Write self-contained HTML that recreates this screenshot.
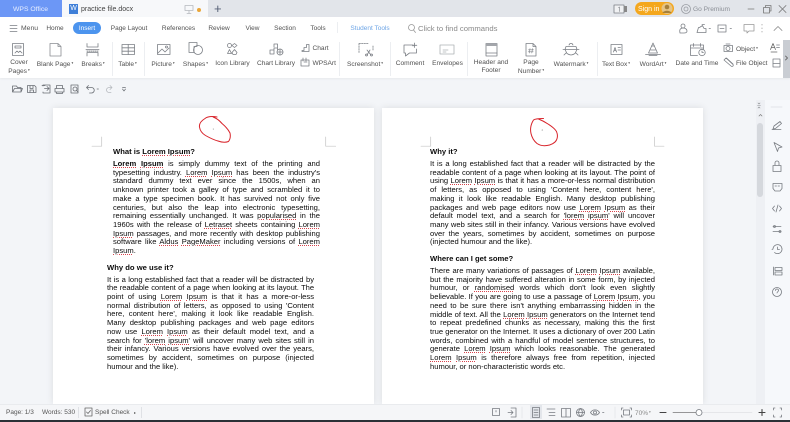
<!DOCTYPE html>
<html lang="en"><head><meta charset="utf-8"><title>practice file.docx</title>
<style>
*{box-sizing:border-box}
html,body{margin:0;padding:0;width:790px;height:422px;overflow:hidden;background:#f3f5f8}
body{position:relative;font-family:"Liberation Sans",sans-serif;color:#555}
.a{position:absolute}
.t{position:absolute;white-space:nowrap;font-size:6.6px;line-height:9px;color:#505050;transform:translateX(-50%)}
.n{position:absolute;white-space:nowrap;font-size:6.6px;line-height:9px;color:#505050}
.t i,.n i{font-style:normal;font-size:3.5px;vertical-align:2px;margin-left:1px}
.m{font-size:6.5px;top:24px}
.page{position:absolute;background:#fff;top:108px;width:321px;height:296px;box-shadow:0 0 7px rgba(0,0,0,.1)}
.b{position:absolute;font-size:7.6px;line-height:8.72px;color:#0c0c0c;filter:blur(.15px)}
.b div{height:8.72px;text-align:justify;text-align-last:justify}
.b div.e{text-align:left;text-align-last:left}
.h{position:absolute;font-size:7.65px;line-height:9px;font-weight:bold;color:#0c0c0c;white-space:nowrap;filter:blur(.15px)}
u{text-decoration:underline dotted #d8434b 1px;text-underline-offset:1.2px}
.sep{position:absolute;width:1px;background:#eceef1}
svg{position:absolute;left:0;top:0}
</style></head><body>

<!-- title bar -->
<div class="a" style="left:0;top:0;width:790px;height:17px;background:#e2e5ea"></div>
<div class="a" style="left:0;top:0;width:62px;height:17px;background:#6c97f6"></div>
<div class="n" style="left:13px;top:5px;color:#e8efff;font-size:6.8px">WPS Office</div>
<div class="a" style="left:62px;top:0;width:146px;height:17px;background:#f7f8fa"></div>
<div class="a" style="left:69px;top:4px;width:9px;height:10px;background:#3f7fd8;color:#fff;font-size:7px;line-height:10px;text-align:center">W</div>
<div class="n" style="left:81px;top:5px;color:#444;font-size:7px">practice file.docx</div>
<div class="a" style="left:197px;top:7.500px;width:4px;height:4px;border-radius:50%;background:#e9a63a"></div>
<div class="n" style="left:214px;top:1px;font-size:13px;line-height:15px;color:#555f75">+</div>
<div class="a" style="left:635px;top:2px;width:39px;height:13px;border-radius:7px;background:#f4a71d"></div>
<div class="n" style="left:638px;top:4.500px;color:#fff;font-size:7px">Sign in</div>
<div class="n" style="left:693px;top:5px;font-size:6.6px;color:#8b8f96">Go Premium</div>

<!-- menu row + ribbon -->
<div class="a" style="left:0;top:17px;width:790px;height:61px;background:#fff;box-shadow:0 1px 2px rgba(0,0,0,.05)"></div>
<div class="n m" style="left:21px;color:#555;font-size:6.8px">Menu</div>
<div class="t m" style="left:55px">Home</div>
<div class="a" style="left:73px;top:22px;width:28px;height:12px;border-radius:6px;background:#4c94ee"></div>
<div class="t m" style="left:87px;color:#fff">Insert</div>
<div class="t m" style="left:129px">Page Layout</div>
<div class="t m" style="left:178.500px">References</div>
<div class="t m" style="left:219px">Review</div>
<div class="t m" style="left:252.500px">View</div>
<div class="t m" style="left:285px">Section</div>
<div class="t m" style="left:318px">Tools</div>
<div class="t m" style="left:370px;color:#6da5e6">Student Tools</div>
<div class="n" style="left:418px;top:24px;font-size:7.7px;color:#8a8a8a">Click to find commands</div>

<div class="sep" style="left:112px;top:42px;height:34px"></div>
<div class="sep" style="left:144px;top:42px;height:34px"></div>
<div class="sep" style="left:339px;top:42px;height:34px"></div>
<div class="sep" style="left:390px;top:42px;height:34px"></div>
<div class="sep" style="left:467px;top:42px;height:34px"></div>
<div class="sep" style="left:597px;top:42px;height:34px"></div>
<div class="sep" style="left:337px;top:22px;height:11px"></div>

<div class="t" style="left:19px;top:58px">Cover</div>
<div class="t" style="left:19px;top:65.500px">Pages<i>▾</i></div>
<div class="t" style="left:55px;top:59px">Blank Page<i>▾</i></div>
<div class="t" style="left:93px;top:59px">Breaks<i>▾</i></div>
<div class="t" style="left:127.500px;top:59px">Table<i>▾</i></div>
<div class="t" style="left:163px;top:59px">Picture<i>▾</i></div>
<div class="t" style="left:195.500px;top:59px">Shapes<i>▾</i></div>
<div class="t" style="left:232.500px;top:59px">Icon Library</div>
<div class="t" style="left:276px;top:59px">Chart Library</div>
<div class="n" style="left:312.500px;top:43.500px">Chart</div>
<div class="n" style="left:312.500px;top:59px">WPSArt</div>
<div class="t" style="left:365px;top:59px">Screenshot<i>▾</i></div>
<div class="t" style="left:410px;top:59px">Comment</div>
<div class="t" style="left:447.500px;top:59px">Envelopes</div>
<div class="t" style="left:491px;top:58px">Header and</div>
<div class="t" style="left:491px;top:65.500px">Footer</div>
<div class="t" style="left:531px;top:58px">Page</div>
<div class="t" style="left:531px;top:65.500px">Number<i>▾</i></div>
<div class="t" style="left:571px;top:59px">Watermark<i>▾</i></div>
<div class="t" style="left:616px;top:59px">Text Box<i>▾</i></div>
<div class="t" style="left:653px;top:59px">WordArt<i>▾</i></div>
<div class="t" style="left:697px;top:59px">Date and Time</div>
<div class="n" style="left:736px;top:43.500px">Object<i>▾</i></div>
<div class="n" style="left:736px;top:59px">File Object</div>
<div class="a" style="left:783px;top:40px;width:7px;height:38px;background:#c9cdd3"></div>

<!-- right scrollbar + sidebar -->
<div class="a" style="left:756px;top:100px;width:9px;height:304px;background:#eef0f4"></div>
<div class="a" style="left:757px;top:123px;width:6px;height:74px;border-radius:3px;background:#d5d8dd"></div>
<div class="a" style="left:765px;top:100px;width:25px;height:304px;background:#f6f8fb"></div>

<!-- pages -->
<div class="page" style="left:53px"></div>
<div class="page" style="left:382px"></div>

<div class="h" style="left:113px;top:147.300px">What is <u>Lorem</u> <u>Ipsum</u>?</div>
<div class="b" style="left:113px;top:160px;width:207px">
<div><b><u>Lorem</u> <u>Ipsum</u></b> is simply dummy text of the printing and</div>
<div>typesetting industry. <u>Lorem</u> <u>Ipsum</u> has been the industry's</div>
<div>standard dummy text ever since the 1500s, when an</div>
<div>unknown printer took a galley of type and scrambled it to</div>
<div>make a type specimen book. It has survived not only five</div>
<div>centuries, but also the leap into electronic typesetting,</div>
<div>remaining essentially unchanged. It was <u>popularised</u> in the</div>
<div>1960s with the release of <u>Letraset</u> sheets containing <u>Lorem</u></div>
<div><u>Ipsum</u> passages, and more recently with desktop publishing</div>
<div>software like <u>Aldus</u> <u>PageMaker</u> including versions of <u>Lorem</u></div>
<div class="e"><u>Ipsum</u>.</div>
</div>

<div class="h" style="left:107px;top:262.800px">Why do we use it?</div>
<div class="b" style="left:107px;top:275.600px;width:207px">
<div>It is a long established fact that a reader will be distracted by</div>
<div style="letter-spacing:-.06px;word-spacing:-.4px">the readable content of a page when looking at its layout. The</div>
<div>point of using <u>Lorem</u> <u>Ipsum</u> is that it has a more-or-less</div>
<div>normal distribution of letters, as opposed to using 'Content</div>
<div>here, content here', making it look like readable English.</div>
<div>Many desktop publishing packages and web page editors</div>
<div>now use <u>Lorem</u> <u>Ipsum</u> as their default model text, and a</div>
<div>search for <u>'lorem</u> <u>ipsum'</u> will uncover many web sites still in</div>
<div>their infancy. Various versions have evolved over the years,</div>
<div>sometimes by accident, sometimes on purpose (injected</div>
<div class="e">humour and the like).</div>
</div>

<div class="h" style="left:430px;top:147.300px">Why it?</div>
<div class="b" style="left:430px;top:160px;width:225px">
<div>It is a long established fact that a reader will be distracted by the</div>
<div>readable content of a page when looking at its layout. The point of</div>
<div>using <u>Lorem</u> <u>Ipsum</u> is that it has a more-or-less normal distribution</div>
<div>of letters, as opposed to using 'Content here, content here',</div>
<div>making it look like readable English. Many desktop publishing</div>
<div>packages and web page editors now use <u>Lorem</u> <u>Ipsum</u> as their</div>
<div>default model text, and a search for <u>'lorem</u> <u>ipsum'</u> will uncover</div>
<div>many web sites still in their infancy. Various versions have evolved</div>
<div>over the years, sometimes by accident, sometimes on purpose</div>
<div class="e">(injected humour and the like).</div>
</div>

<div class="h" style="left:430px;top:253.800px">Where can I get some?</div>
<div class="b" style="left:430px;top:267px;width:225px">
<div>There are many variations of passages of <u>Lorem</u> <u>Ipsum</u> available,</div>
<div>but the majority have suffered alteration in some form, by injected</div>
<div>humour, or <u>randomised</u> words which don't look even slightly</div>
<div>believable. If you are going to use a passage of <u>Lorem</u> <u>Ipsum</u>, you</div>
<div>need to be sure there isn't anything embarrassing hidden in the</div>
<div>middle of text. All the <u>Lorem</u> <u>Ipsum</u> generators on the Internet tend</div>
<div>to repeat predefined chunks as necessary, making this the first</div>
<div>true generator on the Internet. It uses a dictionary of over 200 Latin</div>
<div>words, combined with a handful of model sentence structures, to</div>
<div>generate <u>Lorem</u> <u>Ipsum</u> which looks reasonable. The generated</div>
<div><u>Lorem</u> <u>Ipsum</u> is therefore always free from repetition, injected</div>
<div class="e">humour, or non-characteristic words etc.</div>
</div>

<div class="n" style="left:212.500px;top:125px;font-size:3px;color:#999">1</div>
<div class="n" style="left:541.500px;top:126px;font-size:3px;color:#999">2</div>

<!-- status bar -->
<div class="a" style="left:0;top:404px;width:790px;height:16px;background:#f5f6f8;border-top:1px solid #e9ebee"></div>
<div class="a" style="left:0;top:420px;width:790px;height:2px;background:#2b3036"></div>
<div class="n" style="left:6px;top:408px;font-size:6.5px;color:#555">Page: 1/3</div>
<div class="n" style="left:42px;top:408px;font-size:6.5px;color:#555">Words: 530</div>
<div class="n" style="left:95px;top:408px;font-size:6.5px;color:#555">Spell Check</div>
<div class="n" style="left:134px;top:408px;font-size:4px;color:#555">▸</div>
<div class="sep" style="left:78px;top:407px;height:11px;background:#dfe1e5"></div>
<div class="sep" style="left:141px;top:407px;height:11px;background:#dfe1e5"></div>
<div class="a" style="left:530px;top:405px;width:12px;height:14px;background:#e3e6eb"></div>
<div class="n" style="left:635px;top:408px;font-size:6.500px;color:#888">70%<i>▾</i></div>

<!-- icons and freehand -->
<svg width="790" height="422" viewBox="0 0 790 422" fill="none" stroke="#7b7f85" stroke-width=".8" stroke-linejoin="round" stroke-linecap="round">
<!-- red circles -->
<path d="M217 117C211 116 207 117 205 118.500C201 121 199 124 199.500 127C200 131 203 134 205.500 135.500C210 138 214 140 218 141C222 142.500 226 142.500 228.500 141.500C230.500 139 230.500 135.500 230 133C228 129 225 126 222 123.500C219 120 216 118 213 117" stroke="#d8232a" stroke-width="1"/>
<path d="M543.500 118.500C539 118.500 535 119 533.500 120C531 124 530 129 531 133.500C532 138 534 141 537 143.500C540 145.500 544 146 547 145.500C551 145 555 143 556.500 140C558 137 557.500 134 556.500 131.500C554.500 128 551 126 548 124C545 122 541 120 538.500 119" stroke="#d8232a" stroke-width="1"/>
<!-- crop marks -->
<g stroke="#c4c4c4" stroke-width=".7">
<path d="M101.700 137V146.200H92"/><path d="M325.700 137V146.200H335.700"/>
<path d="M430.700 137V146.200H421"/><path d="M654.500 137V146.200H664"/>
</g>
<!-- title -->
<path d="M185 5.500h8v5h-8zM189 10.500v3M187 13.500h4" stroke="#b5b8bd"/>
<rect x="614" y="5" width="10" height="8" fill="#f0f1f3"/><rect x="624" y="6" width="3" height="6" fill="#888" stroke="none"/>
<path d="M618.500 7.500l1-.5v4.500" stroke-width=".6"/>
<circle cx="667" cy="8.500" r="5.500" fill="#e6c485" stroke="none"/><circle cx="667" cy="7" r="2.300" fill="#a67f3a" stroke="none"/><path d="M662.500 13c1-3 8-3 9 0z" fill="#a67f3a" stroke="none"/>
<circle cx="686" cy="9" r="4.500" stroke="#9a9da3"/><circle cx="686" cy="9" r="2" stroke="#9a9da3"/>
<path d="M748 9h6" stroke="#777"/><path d="M763.500 7.500h6v5.500h-6zM765.500 7.500v-2h5.500v5.500h-1.500" stroke="#777"/><path d="M779 5.500l7 7M786 5.500l-7 7" stroke="#777"/>
<!-- menu -->
<path d="M10 25.500h7M10 28.500h7M10 31.500h7"/>
<circle cx="411.500" cy="27.500" r="3" stroke="#999"/><path d="M413.500 30l2 2.500" stroke="#999"/>
<circle cx="683" cy="26" r="2"/><path d="M680 33c-1-4 1-5 3-5s4 1 4 3-2 2-3 2z"/>
<path d="M697 32.500h9v-4h-2l-1.500-3-3 2h-1zM702 24.500h2.500"/><path d="M709 28.500h1.500" stroke-width=".7"/>
<path d="M718 25h8v7h-8zM720 28.500h4"/><path d="M730 28.500h1.500" stroke-width=".7"/>
<path d="M744 24.500h10v6.500h-5l-2 2v-2h-3z" stroke="#999"/>
<path d="M762 24.500v.5M762 28v.5M762 31.500v.5" stroke="#888"/>
<path d="M774 30.500l4-4 4 4" stroke="#888"/>
<!-- ribbon -->
<rect x="12.500" y="43.500" width="11" height="12"/><path d="M15 46h6v2h-6zM15 53l2-2 1.500 1.500 1.500-1.500 2 2"/>
<path d="M50 43.500h8l3 3v9.500H50zM58 43.500v3h3" stroke="#8a8d92"/>
<path d="M87 43.500v3.500h11v-3.500M87 56v-3.500h11v3.500M86 49.700h13"/><path d="M87 49.700h11" stroke-dasharray="1 1" transform="translate(0 1.500)"/>
<rect x="122" y="44.500" width="12.500" height="10"/><path d="M122 47.800h12.500M122 51.200h12.500M128.200 44.500v10"/>
<rect x="157.500" y="44.500" width="12.500" height="10"/><path d="M158 53l4-4 3 3 4-4"/><circle cx="166.500" cy="47" r="1"/>
<path d="M189 42.500h8v4h-3v6h-5z"/><circle cx="198" cy="50" r="4.500"/>
<circle cx="229.500" cy="45.500" r="2"/><path d="M234.500 43.500l2.500 2-2.500 2-2.500-2zM229.500 49.500l2 4h-4zM234.500 49.500l2.500 3-1 2h-3l-1-2z"/>
<path d="M270 54v-4h4v4zM274 54v-6h3.500M274 47v-3h3.500v6"/><circle cx="280" cy="52" r="3"/><path d="M277 52h6M280 49v6"/>
<path d="M302 50.500h2v-3h2.500v-3h2.500v7h-7z"/>
<rect x="301" y="60" width="8" height="6"/><path d="M303 58v3M306 58v3"/><path d="M304 62h3"/>
<path d="M359 43.500h10M359 43.500v10M373 46v4" stroke-dasharray="1.500 1"/><path d="M370 50l-3 5M367 50l4 5"/><circle cx="366.500" cy="55" r="1"/><circle cx="371.500" cy="55" r="1"/>
<path d="M404 45h9v1M416.500 49v4h-7l-4 3v-3h-1.500v-8"/><path d="M414.500 43v4.500M412.300 45.300h4.500"/>
<rect x="440" y="45" width="14" height="9" stroke="#aeb1b5"/><path d="M443 50h5M443 52h3" stroke="#aeb1b5"/>
<rect x="486" y="43.500" width="11" height="12.500"/><path d="M486 53h11"/><rect x="486" y="43.500" width="11" height="2.500" fill="#a3a6ab" stroke="none"/>
<path d="M526 43.500h7l3 3v9.500h-10zM533 43.500v3h3"/><path d="M530 48.500l-.7 4.500M532.500 48.500l-.7 4.500M528.500 49.800h5M528.200 51.800h5" stroke-width=".6"/>
<path d="M566 46.500h10l1 3-2 4c-3 2-5 2-8 0l-2-4zM564 49.500h14M569 45l1-1.500h2l1 1.500M563 49.500h2M577 49.500h2M566 53l-2 2M576 53l2 2"/>
<rect x="611" y="44.500" width="11" height="10"/><path d="M613.500 52l1.500-4.500 1.500 4.500M614 50.500h2M618 47.500h2.500M618 50h2.500"/>
<path d="M648.500 53l4.500-10 4.500 10zM650.500 50h5M645.500 54.500h15"/><path d="M651.500 46h3M649 55.500h8"/>
<path d="M690.500 45h13v4M690.500 45v10.500h7M690.500 48h13M693.500 43.500v3M700.500 43.500v3"/><circle cx="702" cy="52.500" r="3.200"/><path d="M702 51v1.500h1.500"/>
<path d="M724 45.500h8.500v6h-8.500z"/><circle cx="728" cy="48.500" r="2"/><path d="M726 44h4"/>
<path d="M724 60l2-2 7 6.500c1 1.500-1 2.500-2 1.500l-7-6M726.500 58l6.500 6"/>
<path d="M773 43.500l-2.500 6M773 43.500l2.500 6M771.500 47.500h3M771 52h6" stroke="#666"/><path d="M776.500 45h3M776.500 47.500h3"/>
<rect x="773" y="59" width="7" height="8"/><path d="M773 63.500h7"/>
<path d="M785.500 56l2 2-2 2" stroke="#555"/>
<!-- quick toolbar -->
<g stroke="#6a6e74">
<path d="M12.500 92v-6h4l1 1.500h3.500V92zM12.500 92l2-3.500h8L21 92"/>
<path d="M27.500 85.500h7l1.500 1.500v5.500h-8.500zM30 85.500v3h3v-3M30 92.500v-2.500h3.500v2.500"/>
<path d="M43 86v-1h7v8h-7v-1M44.500 88.500h4M47 86.500l2 2-2 2M42 85.500h3"/>
<path d="M56.500 88.500v-3h6v3M55 88.500h9v3.500h-9zM56.500 92v1.500h6V92"/>
<path d="M71 85h7v8h-7z"/><circle cx="75" cy="89" r="2"/><path d="M76.500 90.500l1.500 1.500"/>
<path d="M86.500 87.500h5a2.500 2.500 0 0 1 0 5.500h-2M86.500 87.500l2-2M86.500 87.500l2 2"/>
<path d="M97 89h1.500" stroke-width=".7"/>
<path d="M122.500 87.500h3M122.500 89l1.500 2 1.500-2" stroke-width=".7"/>
</g>
<path d="M112 87.500h-3a2.500 2.500 0 0 0 0 5h2M112 87.500l-2-2M112 87.500l-2 2" stroke="#b7babf"/>
<!-- right top ruler widget -->
<path d="M760 103l-1 1-1-1M757.500 105.500h3M760 108l-1-1-1 1" stroke="#8a8d92" stroke-width=".6"/>
<path d="M759 116l1.500-1.500 1.500 1.500" stroke="#777" stroke-width=".7"/>
<path d="M771 107h11" stroke="#dcdee2"/>
<!-- sidebar -->
<g stroke="#777b81">
<path d="M773 129l1-3 6-4.500 1.500 2-6 5zM772 129.500h9"/>
<path d="M774 142.500l8 4.500-3.500 1-1 3.500z"/>
<path d="M773 165.500h8v6h-8zM775 165.500v-2.500a2 2 0 0 1 4 0v2.500"/>
<path d="M773 183.500h9v5l-2 2.500h-5l-2-2.500zM775 186h1.500M778 186h1.500"/>
<path d="M774.500 206l-2 2.500 2 2.500M779.500 206l2 2.500-2 2.500M778 205l-2 7"/>
<path d="M773 226.500h8M773 231.500h8"/><circle cx="774.500" cy="226.500" r="1"/><circle cx="780" cy="231.500" r="1"/>
<path d="M773 249a4.500 4.500 0 1 1 1.500 3.500M773 249l-1 .5M777.500 247v2.500h2"/>
<path d="M773.500 267v8M775 267.500h7v3h-7zM775 272h7v3h-7z"/>
<circle cx="777" cy="292" r="4.500"/><path d="M775.500 290.500c0-2 3-2 3 0 0 1-1.500 1.500-1.500 2.500"/>
</g>
<!-- status icons -->
<rect x="85" y="408" width="7" height="8" stroke="#666"/><path d="M86.500 412l1.500 1.500 2.500-3" stroke="#666"/>
<g stroke="#777b81">
<path d="M492.500 408.500h7v7h-7zM496 410.500v1.500"/>
<path d="M511 408h5v9h-5M508 412.500h5M511 410.500l2 2-2 2"/>
<path d="M532.500 407.500h7v10h-7zM534 410h4M534 412.500h4M534 415h4"/>
<path d="M547 409h8M549 412.500h6M549 415.500h6"/>
<path d="M561.500 408.500h9v8.500h-9zM566 408.500v8.500"/>
<circle cx="580.500" cy="412.500" r="4"/><path d="M576.500 412.500h8M580.500 408.500c-2.500 2.500-2.500 5.500 0 8M580.500 408.500c2.500 2.500 2.500 5.500 0 8"/>
<path d="M590.500 412.500c2-3.500 7-3.500 9 0-2 3.500-7 3.500-9 0z"/><circle cx="595" cy="412.500" r="1.500"/>
<path d="M602.500 412.500h1.500" stroke-width=".7"/>
<path d="M623 408h-1.500v2M630 408h1.500v2M623 417h-1.500v-2M630 417h1.500v-2"/><rect x="623.500" y="410" width="6" height="5"/>
<path d="M660 412.500h6" stroke="#444" stroke-width="1.100"/>
<path d="M673 412.500h23" stroke="#777"/><path d="M702 412.500h50" stroke="#dfe1e4"/><circle cx="699" cy="412.500" r="3" fill="#fff"/>
<path d="M759 412.500h6M762 409.500v6" stroke="#444" stroke-width="1.100"/>
<path d="M775 408h-1.500v2M780 408h1.500v2M775 417h-1.500v-2M780 417h1.500v-2"/>
</g>
<path d="M522 407v11M615 407v11" stroke="#e3e5e8"/>
</svg>
</body></html>
